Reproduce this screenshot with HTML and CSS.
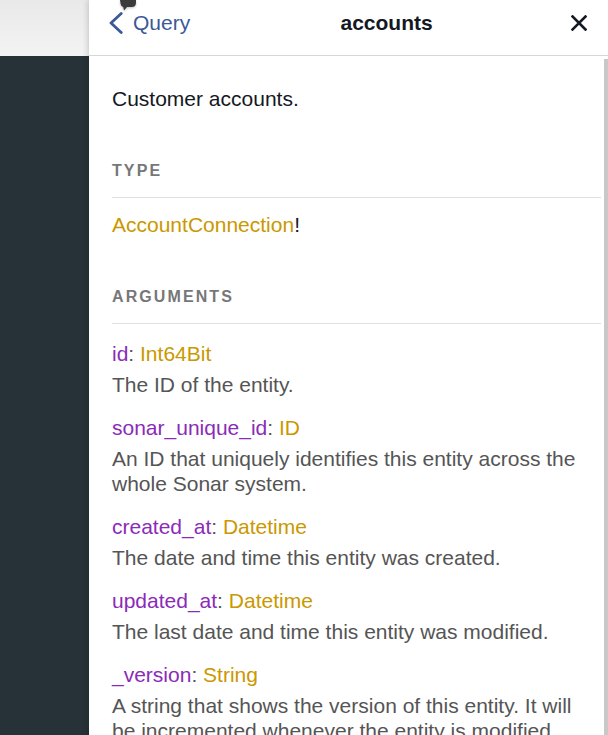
FILE: index.html
```html
<!DOCTYPE html>
<html lang="en">
<head>
<meta charset="utf-8">
<title>accounts</title>
<link rel="stylesheet" href="styles.css">
</head>
<body>
<div class="app">
  <div class="side">
    <div class="side-top"></div>
    <div class="side-dark"></div>
  </div>
  <div class="doc">
    <div class="titlebar">
      <a class="back" href="#">
        <svg class="chev" width="14" height="22" viewBox="0 0 14 22"><polyline points="12.2,1.5 2,11 12.2,20.5" fill="none" stroke="#3b5998" stroke-width="2.8" stroke-linecap="round" stroke-linejoin="round"/></svg>
        <span>Query</span>
      </a>
      <div class="title">accounts</div>
      <button class="close" type="button" aria-label="Close">
        <svg width="16" height="16" viewBox="0 0 16 16"><path d="M1.5 1.5 L14.5 14.5 M14.5 1.5 L1.5 14.5" stroke="#141823" stroke-width="2.6" stroke-linecap="square"/></svg>
      </button>
    </div>
    <div class="contents">
      <div class="description">Customer accounts.</div>
      <div class="category">
        <div class="category-title">TYPE</div>
        <div class="type-value"><span class="type-name">AccountConnection</span>!</div>
      </div>
      <div class="category">
        <div class="category-title">ARGUMENTS</div>
        <div class="args">
          <div class="arg">
            <div class="arg-head"><span class="arg-name">id</span>: <span class="type-name">Int64Bit</span></div>
            <div class="arg-desc">The ID of the entity.</div>
          </div>
          <div class="arg">
            <div class="arg-head"><span class="arg-name">sonar_unique_id</span>: <span class="type-name">ID</span></div>
            <div class="arg-desc">An ID that uniquely identifies this entity across the whole Sonar system.</div>
          </div>
          <div class="arg">
            <div class="arg-head"><span class="arg-name">created_at</span>: <span class="type-name">Datetime</span></div>
            <div class="arg-desc">The date and time this entity was created.</div>
          </div>
          <div class="arg">
            <div class="arg-head"><span class="arg-name">updated_at</span>: <span class="type-name">Datetime</span></div>
            <div class="arg-desc">The last date and time this entity was modified.</div>
          </div>
          <div class="arg">
            <div class="arg-head"><span class="arg-name">_version</span>: <span class="type-name">String</span></div>
            <div class="arg-desc">A string that shows the version of this entity. It will be incremented whenever the entity is modified.</div>
          </div>
        </div>
      </div>
    </div>
    <div class="scroll-thumb"></div>
  </div>
  <svg class="tip" width="20" height="12" viewBox="0 0 20 12"><path d="M1 0 H17 V2.5 Q17 7 12.5 7 H8 L5 10.5 L4.2 7 Q2 6.5 1.6 4 Z" fill="#3a3a3a"/></svg>
</div>
</body>
</html>
```

FILE: styles.css
```css
html, body {
  margin: 0;
  padding: 0;
  background: #ffffff;
}

body {
  font-family: "Liberation Sans", Arial, sans-serif;
  color: #141823;
}

.app {
  position: relative;
  display: flex;
  width: 608px;
  height: 735px;
  overflow: hidden;
}

.side {
  width: 89px;
  flex: none;
  display: flex;
  flex-direction: column;
}

.side-top {
  flex: none;
  height: 56px;
  background: linear-gradient(#e9e9e9, #f3f3f3);
}

.side-dark {
  flex: 1;
  background: #263238;
}

.doc {
  position: relative;
  flex: 1;
  display: flex;
  flex-direction: column;
  min-height: 0;
  background: #ffffff;
  box-shadow: -1px 0 6px rgba(0, 0, 0, 0.18);
  z-index: 1;
}

.titlebar {
  flex: none;
  box-sizing: border-box;
  height: 56px;
  border-bottom: 1px solid #d6d6d6;
  display: flex;
  align-items: flex-start;
  padding: 10px 21px 0 20px;
  font-size: 21px;
  line-height: 25px;
}

.back {
  display: flex;
  align-items: center;
  color: #3b5998;
  text-decoration: none;
  margin-right: 12px;
  height: 25px;
}

.chev {
  display: block;
  margin-right: 10px;
}

.title {
  flex: 1;
  text-align: center;
  font-weight: bold;
  color: #141823;
}

.close {
  border: 0;
  background: none;
  padding: 0;
  margin: 0;
  height: 25px;
  display: flex;
  align-items: center;
  cursor: pointer;
}

.close svg {
  display: block;
  margin-top: 1px;
}

.contents {
  flex: 1;
  min-height: 0;
  overflow: hidden;
  padding: 30px 22px 0 23px;
  font-size: 21px;
  line-height: 25px;
}

.description {
  color: #141823;
}

.category {
  margin-top: 50px;
}

.category-title {
  font-size: 16px;
  line-height: 20px;
  font-weight: bold;
  letter-spacing: 2.1px;
  color: #777777;
  padding-bottom: 16px;
  border-bottom: 1px solid #e0e0e0;
  margin-right: -15px;
}

.type-value {
  margin-top: 14px;
  color: #141823;
}

.type-name {
  color: #ca9800;
}

.args {
  margin-top: 17px;
}

.arg {
  margin-bottom: 18px;
}

.arg-head {
  color: #555555;
  margin-bottom: 6px;
}

.arg-name {
  color: #8b2bb9;
}

.arg-desc {
  color: #555555;
}

.scroll-thumb {
  position: absolute;
  right: 0;
  top: 59px;
  bottom: 0;
  width: 4px;
  background: #c8c8c8;
}

.tip {
  position: absolute;
  left: 119px;
  top: 0;
  z-index: 2;
  filter: drop-shadow(0 1px 1px rgba(0, 0, 0, 0.25));
}
```
